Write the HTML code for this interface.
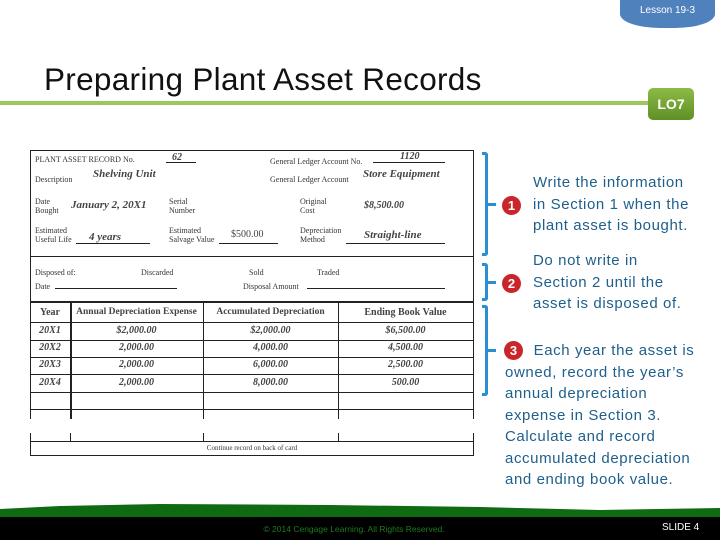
<!DOCTYPE html>
<html><head><style>
*{margin:0;padding:0;box-sizing:border-box}
body{width:720px;height:540px;position:relative;background:#fff;overflow:hidden;font-family:"Liberation Sans",sans-serif}
.a{position:absolute}
.s{font-family:"Liberation Serif",serif;color:#333;font-size:8px;line-height:9px}
.h{font-family:"Liberation Serif",serif;font-weight:bold;font-style:italic;color:#444;font-size:10px}
.t{position:absolute;font-family:"Liberation Sans",sans-serif;font-size:15px;letter-spacing:0.6px;line-height:21.5px;color:#1f5f8c}
.b{position:absolute;width:19px;height:19px;border-radius:50%;background:#c8262b;color:#fff;font-weight:bold;font-size:13px;text-align:center;line-height:19px}
.br{position:absolute;border:3px solid #2a8fd0;border-left:none;border-radius:0 3px 3px 0;width:6px}
.tk{position:absolute;width:8px;height:3px;background:#2a8fd0}
.row{position:absolute;left:30px;width:444px;border-top:1.5px solid #222}
.vl{position:absolute;border-left:1.5px solid #222}
.c{position:absolute;text-align:center;font-family:"Liberation Serif",serif;font-weight:bold;font-style:italic;font-size:10px;color:#444}
</style></head><body>
<div class="a" style="left:620px;top:-10px;width:95px;height:38px;background:#4f81bd;border-radius:0 0 40px 40px/0 0 14px 14px;color:#fff;font-size:10px;text-align:center;padding-top:15px">Lesson 19-3</div>
<div class="a" style="left:44px;top:61px;font-size:31.5px;color:#111;letter-spacing:0.3px">Preparing Plant Asset Records</div>
<div class="a" style="left:0;top:101px;width:650px;height:4px;background:#9dc75a"></div>
<div class="a" style="left:648px;top:88px;width:46px;height:32px;border-radius:5px;background:linear-gradient(#8dbb45,#5f8f27);color:#fff;font-weight:bold;font-size:14px;text-align:center;line-height:32px">LO7</div>

<div class="a" style="left:30px;top:150px;width:444px;height:107px;border:1.5px solid #222;border-bottom:none"></div>
<div class="a" style="left:30px;top:256px;width:444px;height:47px;border:1.5px solid #222;border-bottom:2.5px solid #222"></div>
<div class="a s" style="left:35px;top:155px">PLANT ASSET RECORD No.</div>
<div class="a h" style="left:172px;top:152px">62</div>
<div class="a" style="left:166px;top:162px;width:30px;border-top:1px solid #222"></div>
<div class="a s" style="left:270px;top:157px">General Ledger Account No.</div>
<div class="a h" style="left:400px;top:151px">1120</div>
<div class="a" style="left:373px;top:162px;width:72px;border-top:1px solid #222"></div>
<div class="a s" style="left:35px;top:175px">Description</div>
<div class="a h" style="left:93px;top:168px;font-size:11px">Shelving Unit</div>
<div class="a s" style="left:270px;top:175px">General Ledger Account</div>
<div class="a h" style="left:363px;top:168px;font-size:11px">Store Equipment</div>
<div class="a s" style="left:35px;top:197px">Date<br>Bought</div>
<div class="a h" style="left:71px;top:199px;font-size:11px">January 2, 20X1</div>
<div class="a s" style="left:169px;top:197px">Serial<br>Number</div>
<div class="a s" style="left:300px;top:197px">Original<br>Cost</div>
<div class="a h" style="left:364px;top:200px">$8,500.00</div>
<div class="a s" style="left:35px;top:226px">Estimated<br>Useful Life</div>
<div class="a h" style="left:89px;top:231px;font-size:11px">4 years</div>
<div class="a" style="left:76px;top:243px;width:74px;border-top:1px solid #222"></div>
<div class="a s" style="left:169px;top:226px">Estimated<br>Salvage Value</div>
<div class="a h" style="left:231px;top:229px;font-style:normal;font-weight:normal">$500.00</div>
<div class="a" style="left:219px;top:243px;width:59px;border-top:1px solid #222"></div>
<div class="a s" style="left:300px;top:226px">Depreciation<br>Method</div>
<div class="a h" style="left:364px;top:229px;font-size:11px">Straight-line</div>
<div class="a" style="left:346px;top:243px;width:99px;border-top:1px solid #222"></div>
<div class="a s" style="left:35px;top:268px">Disposed of:</div>
<div class="a s" style="left:141px;top:268px">Discarded</div>
<div class="a s" style="left:249px;top:268px">Sold</div>
<div class="a s" style="left:317px;top:268px">Traded</div>
<div class="a s" style="left:35px;top:282px">Date</div>
<div class="a" style="left:55px;top:288px;width:122px;border-top:1px solid #222"></div>
<div class="a s" style="left:243px;top:282px">Disposal Amount</div>
<div class="a" style="left:307px;top:288px;width:138px;border-top:1px solid #222"></div>

<div class="vl" style="left:30px;top:302px;height:117px"></div>
<div class="vl" style="left:70px;top:302px;height:117px;border-left-width:2px"></div>
<div class="vl" style="left:203px;top:302px;height:117px"></div>
<div class="vl" style="left:338px;top:302px;height:117px"></div>
<div class="vl" style="left:473px;top:302px;height:117px"></div>
<div class="row" style="top:322px"></div>
<div class="row" style="top:340px"></div>
<div class="row" style="top:357px"></div>
<div class="row" style="top:374px"></div>
<div class="row" style="top:392px"></div>
<div class="row" style="top:409px"></div>
<div class="c" style="left:30px;width:40px;top:307px;font-style:normal">Year</div>
<div class="c" style="left:70px;width:133px;top:307px;font-style:normal;font-size:9.5px">Annual Depreciation Expense</div>
<div class="c" style="left:203px;width:135px;top:307px;font-style:normal;font-size:9.5px">Accumulated Depreciation</div>
<div class="c" style="left:338px;width:135px;top:307px;font-style:normal">Ending Book Value</div>
<div class="c" style="left:30px;width:40px;top:325px">20X1</div>
<div class="c" style="left:70px;width:133px;top:325px">$2,000.00</div>
<div class="c" style="left:203px;width:135px;top:325px">$2,000.00</div>
<div class="c" style="left:338px;width:135px;top:325px">$6,500.00</div>
<div class="c" style="left:30px;width:40px;top:342px">20X2</div>
<div class="c" style="left:70px;width:133px;top:342px">2,000.00</div>
<div class="c" style="left:203px;width:135px;top:342px">4,000.00</div>
<div class="c" style="left:338px;width:135px;top:342px">4,500.00</div>
<div class="c" style="left:30px;width:40px;top:359px">20X3</div>
<div class="c" style="left:70px;width:133px;top:359px">2,000.00</div>
<div class="c" style="left:203px;width:135px;top:359px">6,000.00</div>
<div class="c" style="left:338px;width:135px;top:359px">2,500.00</div>
<div class="c" style="left:30px;width:40px;top:377px">20X4</div>
<div class="c" style="left:70px;width:133px;top:377px">2,000.00</div>
<div class="c" style="left:203px;width:135px;top:377px">8,000.00</div>
<div class="c" style="left:338px;width:135px;top:377px">500.00</div>
<div class="vl" style="left:30px;top:433px;height:23px"></div>
<div class="vl" style="left:70px;top:433px;height:9px"></div>
<div class="vl" style="left:203px;top:433px;height:9px"></div>
<div class="vl" style="left:338px;top:433px;height:9px"></div>
<div class="vl" style="left:473px;top:433px;height:23px"></div>
<div class="row" style="top:441px"></div>
<div class="row" style="top:455px"></div>
<div class="a s" style="left:30px;width:444px;top:444px;text-align:center;font-size:7px">Continue record on back of card</div>

<div class="br" style="left:482px;top:152px;height:104px"></div><div class="tk" style="left:488px;top:203px"></div>
<div class="br" style="left:482px;top:263px;height:38px"></div><div class="tk" style="left:488px;top:281px"></div>
<div class="br" style="left:482px;top:305px;height:91px"></div><div class="tk" style="left:488px;top:349px"></div>
<div class="b" style="left:502px;top:196px">1</div>
<div class="b" style="left:502px;top:274px">2</div>
<div class="b" style="left:504px;top:341px">3</div>
<div class="t" style="left:533px;top:172px">Write the information<br>in Section 1 when the<br>plant asset is bought.</div>
<div class="t" style="left:533px;top:250px">Do not write in<br>Section 2 until the<br>asset is disposed of.</div>
<div class="t" style="left:505px;top:340px">&nbsp;&nbsp;&nbsp;&nbsp;&nbsp;&nbsp;Each year the asset is<br>owned, record the year’s<br>annual depreciation<br>expense in Section 3.<br>Calculate and record<br>accumulated depreciation<br>and ending book value.</div>

<svg class="a" style="left:0;top:500px" width="720" height="40"><path d="M0 9 L60 6 L160 4 L330 5 L480 7 L600 10 L720 8 L720 40 L0 40Z" fill="#0e6b12"/><rect x="0" y="17" width="720" height="23" fill="#000"/></svg>
<div class="a" style="left:0;width:720px;top:524px;text-align:center;font-size:8.5px;color:#1f7a1f;padding-right:12px">© 2014 Cengage Learning. All Rights Reserved.</div>
<div class="a" style="left:662px;top:522px;font-size:10px;color:#fff">SLIDE 4</div>
</body></html>
